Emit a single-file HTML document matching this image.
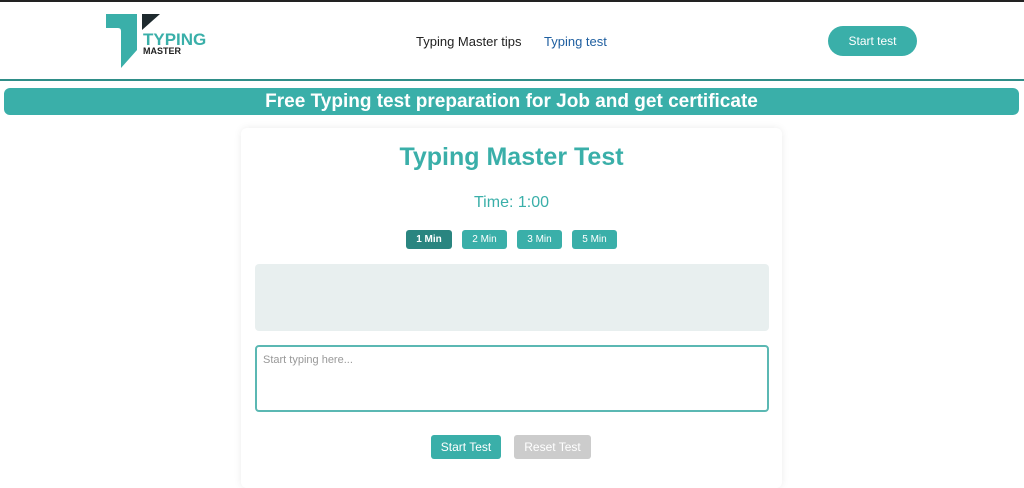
<!DOCTYPE html>
<html><head><style>
*{margin:0;padding:0;box-sizing:border-box}
body{width:1024px;height:475px;overflow:hidden;background:#fff;font-family:"Liberation Sans",sans-serif;position:relative}
.a{position:absolute}
.btn{position:absolute;color:#fff;font-size:11px;text-align:center;border-radius:3px;background:#3aafa9;line-height:19px;height:19px}
</style></head><body>
<div class="a" style="left:0;top:0;width:1024px;height:2px;background:#222"></div>
<svg class="a" style="left:104px;top:12px" width="60" height="60" viewBox="104 12 60 60">
<path d="M106 14 H137 V50 L121 68 V31 Q121 28 118 28 H106 Z" fill="#3aafa9"/>
<path d="M142 14 H160 L142 30 Z" fill="#1e2a2e"/>
</svg>
<div class="a" style="left:143px;top:30px;font-size:17px;font-weight:bold;color:#3aafa9">TYPING</div>
<div class="a" style="left:143px;top:46px;font-size:9px;font-weight:bold;color:#222">MASTER</div>
<div class="a" style="left:416px;top:34px;font-size:13px;color:#222">Typing Master tips</div>
<div class="a" style="left:544px;top:34px;font-size:13px;color:#1f5fa0">Typing test</div>
<div class="a" style="left:828px;top:26px;width:89px;height:30px;border-radius:15px;background:#3aafa9;color:#fff;font-size:12px;text-align:center;line-height:30px">Start test</div>
<div class="a" style="left:0;top:79px;width:1024px;height:2px;background:#2f8e88"></div>
<div class="a" style="left:4px;top:88px;width:1015px;height:27px;border-radius:6px;background:#3aafa9;color:#fff;font-size:19px;font-weight:bold;text-align:center;line-height:27px">Free Typing test preparation for Job and get certificate</div>
<div class="a" style="left:241px;top:128px;width:541px;height:360px;background:#fff;box-shadow:0 0 8px rgba(0,0,0,0.08);border-radius:6px"></div>
<div class="a" style="left:241px;top:143px;width:541px;text-align:center;font-size:25px;font-weight:bold;color:#3aafa9">Typing Master Test</div>
<div class="a" style="left:241px;top:194px;width:541px;text-align:center;font-size:16px;color:#3aafa9">Time: 1:00</div>
<div class="btn" style="left:406px;top:230px;width:46px;background:#2a8580;font-weight:bold;font-size:10px">1 Min</div>
<div class="btn" style="left:462px;top:230px;width:45px;font-size:10px">2 Min</div>
<div class="btn" style="left:517px;top:230px;width:45px;font-size:10px">3 Min</div>
<div class="btn" style="left:572px;top:230px;width:45px;font-size:10px">5 Min</div>
<div class="a" style="left:255px;top:264px;width:514px;height:67px;background:#e8efef;border-radius:4px"></div>
<div class="a" style="left:255px;top:345px;width:514px;height:67px;border:2px solid #5bb8b3;border-radius:4px"></div>
<div class="a" style="left:263px;top:354px;font-size:11px;color:#999">Start typing here...</div>
<div class="btn" style="left:431px;top:435px;width:70px;height:24px;line-height:24px;font-size:12px">Start Test</div>
<div class="btn" style="left:514px;top:435px;width:77px;height:24px;line-height:24px;font-size:12px;background:#ccc">Reset Test</div>
</body></html>
